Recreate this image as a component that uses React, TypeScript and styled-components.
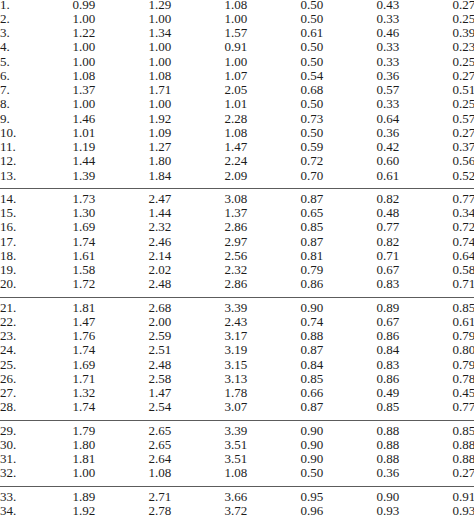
import React from "react";
import styled, { createGlobalStyle } from "styled-components";

const groups: string[][][] = [
  [
    ["1.", "0.99", "1.29", "1.08", "0.50", "0.43", "0.27"],
    ["2.", "1.00", "1.00", "1.00", "0.50", "0.33", "0.25"],
    ["3.", "1.22", "1.34", "1.57", "0.61", "0.46", "0.39"],
    ["4.", "1.00", "1.00", "0.91", "0.50", "0.33", "0.23"],
    ["5.", "1.00", "1.00", "1.00", "0.50", "0.33", "0.25"],
    ["6.", "1.08", "1.08", "1.07", "0.54", "0.36", "0.27"],
    ["7.", "1.37", "1.71", "2.05", "0.68", "0.57", "0.51"],
    ["8.", "1.00", "1.00", "1.01", "0.50", "0.33", "0.25"],
    ["9.", "1.46", "1.92", "2.28", "0.73", "0.64", "0.57"],
    ["10.", "1.01", "1.09", "1.08", "0.50", "0.36", "0.27"],
    ["11.", "1.19", "1.27", "1.47", "0.59", "0.42", "0.37"],
    ["12.", "1.44", "1.80", "2.24", "0.72", "0.60", "0.56"],
    ["13.", "1.39", "1.84", "2.09", "0.70", "0.61", "0.52"],
  ],
  [
    ["14.", "1.73", "2.47", "3.08", "0.87", "0.82", "0.77"],
    ["15.", "1.30", "1.44", "1.37", "0.65", "0.48", "0.34"],
    ["16.", "1.69", "2.32", "2.86", "0.85", "0.77", "0.72"],
    ["17.", "1.74", "2.46", "2.97", "0.87", "0.82", "0.74"],
    ["18.", "1.61", "2.14", "2.56", "0.81", "0.71", "0.64"],
    ["19.", "1.58", "2.02", "2.32", "0.79", "0.67", "0.58"],
    ["20.", "1.72", "2.48", "2.86", "0.86", "0.83", "0.71"],
  ],
  [
    ["21.", "1.81", "2.68", "3.39", "0.90", "0.89", "0.85"],
    ["22.", "1.47", "2.00", "2.43", "0.74", "0.67", "0.61"],
    ["23.", "1.76", "2.59", "3.17", "0.88", "0.86", "0.79"],
    ["24.", "1.74", "2.51", "3.19", "0.87", "0.84", "0.80"],
    ["25.", "1.69", "2.48", "3.15", "0.84", "0.83", "0.79"],
    ["26.", "1.71", "2.58", "3.13", "0.85", "0.86", "0.78"],
    ["27.", "1.32", "1.47", "1.78", "0.66", "0.49", "0.45"],
    ["28.", "1.74", "2.54", "3.07", "0.87", "0.85", "0.77"],
  ],
  [
    ["29.", "1.79", "2.65", "3.39", "0.90", "0.88", "0.85"],
    ["30.", "1.80", "2.65", "3.51", "0.90", "0.88", "0.88"],
    ["31.", "1.81", "2.64", "3.51", "0.90", "0.88", "0.88"],
    ["32.", "1.00", "1.08", "1.08", "0.50", "0.36", "0.27"],
  ],
  [
    ["33.", "1.89", "2.71", "3.66", "0.95", "0.90", "0.91"],
    ["34.", "1.92", "2.78", "3.72", "0.96", "0.93", "0.93"],
  ],
];

const GlobalStyle = createGlobalStyle`
  html, body {
    margin: 0;
    padding: 0;
    background: #fff;
    overflow: hidden;
  }
`;

const Sheet = styled.div`
  width: 474px;
  height: 520px;
  overflow: hidden;
  font-family: "Liberation Serif", "Times New Roman", serif;
  font-size: 13px;
  color: #1c1c1c;
`;

const Body = styled.div`
  margin-top: -2.5px;
`;

const Group = styled.div<{ $ruled: boolean }>`
  padding-bottom: ${(p) => (p.$ruled ? "5px" : "0")};
  margin-bottom: ${(p) => (p.$ruled ? "3px" : "0")};
  border-bottom: ${(p) => (p.$ruled ? "1.5px solid #5c5c5c" : "none")};
  width: 528px;
`;

const Row = styled.div`
  display: grid;
  grid-template-columns: 72.5px repeat(6, 76px);
  height: 14.25px;
  line-height: 14.25px;
  white-space: nowrap;
`;

const Cell = styled.span`
  text-align: left;
`;

export default function App() {
  return (
    <>
      <GlobalStyle />
      <Sheet>
        <Body>
          {groups.map((rows, gi) => (
            <Group key={gi} $ruled={gi < groups.length - 1}>
              {rows.map((cells) => (
                <Row key={cells[0]}>
                  {cells.map((c, ci) => (
                    <Cell key={ci}>{c}</Cell>
                  ))}
                </Row>
              ))}
            </Group>
          ))}
        </Body>
      </Sheet>
    </>
  );
}
